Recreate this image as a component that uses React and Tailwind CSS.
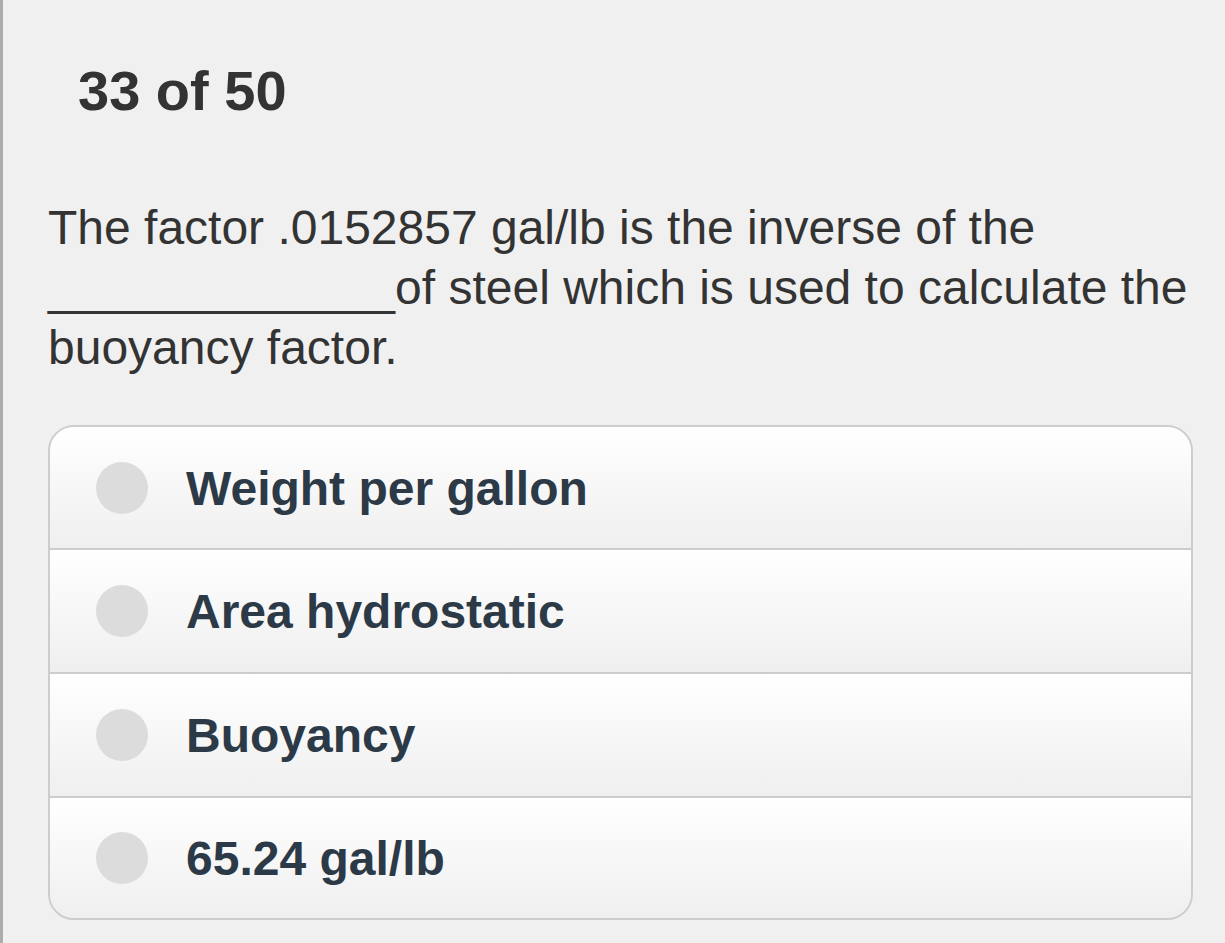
const options = [
  { label: "Weight per gallon", h: "h-[121px]" },
  { label: "Area hydrostatic", h: "h-[124px]" },
  { label: "Buoyancy", h: "h-[124px]" },
  { label: "65.24 gal/lb", h: "h-[122px]" },
];

export default function App() {
  return (
    <div
      className="min-h-[943px] bg-[#f0f0f0] border-l-[3px] border-[#acacac] pl-[45px] pr-[32px] pt-[59px]"
      style={{ fontFamily: '"Liberation Sans", Arial, Helvetica, sans-serif' }}
    >
      <h1 className="pl-[30px] text-[56px] leading-[64px] font-bold text-[#333]">33 of 50</h1>

      <p className="mt-[75px] text-[48px] leading-[60px] text-[#333]">
        The factor .0152857 gal/lb is the inverse of the _____________of steel which is used to calculate the buoyancy factor.
      </p>

      <div className="mt-[47px] rounded-[26px] border-2 border-[#cdcdcd] overflow-hidden">
        {options.map((opt, i) => (
          <div
            key={opt.label}
            className={
              opt.h +
              " flex items-center pl-[46px] bg-gradient-to-b from-white to-[#efefef]" +
              (i > 0 ? " border-t-2 border-[#cdcdcd]" : "")
            }
          >
            <span className="w-[52px] h-[52px] rounded-full bg-[#dcdcdc] shrink-0" />
            <span className="ml-[38px] pt-[2px] text-[48px] font-bold text-[#2c3a47]">{opt.label}</span>
          </div>
        ))}
      </div>
    </div>
  );
}
